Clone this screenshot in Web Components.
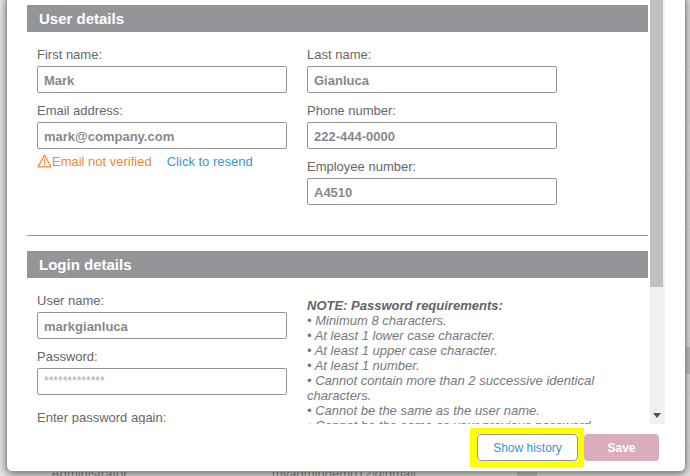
<!DOCTYPE html>
<html>
<head>
<meta charset="utf-8">
<title>Edit user</title>
<style>
  html, body { margin: 0; height: 476px; overflow: hidden; background: #e6e7e7; }
  body { font-family: "Liberation Sans", Arial, sans-serif; position: relative; }
</style>
</head>
<body>
<user-table>
  <user-row></user-row>
  <user-row></user-row>
  <user-row></user-row>
  <user-row></user-row>
  <user-row></user-row>
  <user-row></user-row>
  <user-row side-action></user-row>
  <user-row></user-row>
  <user-row name="Administrator" email="myadmindemo12@gmail" row-action></user-row>
</user-table>

<modal-dialog>
  <form-section heading="User details">
    <div>
      <form-field label="First name:" value="Mark"></form-field>
      <form-field label="Email address:" value="mark@company.com"></form-field>
      <verify-notice></verify-notice>
    </div>
    <div>
      <form-field label="Last name:" value="Gianluca"></form-field>
      <form-field label="Phone number:" value="222-444-0000"></form-field>
      <form-field label="Employee number:" value="A4510"></form-field>
    </div>
  </form-section>
  <section-rule></section-rule>
  <form-section heading="Login details">
    <div>
      <form-field label="User name:" value="markgianluca"></form-field>
      <form-field label="Password:" placeholder="*************"></form-field>
      <form-field label="Enter password again:" placeholder="*************" spaced></form-field>
    </div>
    <password-notes>
      <b>NOTE: Password requirements:</b>
      <span>• Minimum 8 characters.</span>
      <span>• At least 1 lower case character.</span>
      <span>• At least 1 upper case character.</span>
      <span>• At least 1 number.</span>
      <span>• Cannot contain more than 2 successive identical characters.</span>
      <span>• Cannot be the same as the user name.</span>
      <span>• Cannot be the same as your previous password.</span>
    </password-notes>
  </form-section>

  <app-button slot="footer" kind="outline" flagged>Show history</app-button>
  <app-button slot="footer" kind="disabled">Save</app-button>
</modal-dialog>

<script>
class UserTable extends HTMLElement {
  constructor() {
    super();
    this.attachShadow({ mode: 'open' });
    this.shadowRoot.innerHTML = `
      <style>
        :host {
          display: block;
          padding-top: 13px;
          height: 463px;
          overflow: hidden;
        }
      </style>
      <slot></slot>
    `;
  }
}

class UserRow extends HTMLElement {
  constructor() {
    super();
    this.attachShadow({ mode: 'open' });
  }

  connectedCallback() {
    const name = this.getAttribute('name') || '';
    const email = this.getAttribute('email') || '';
    this.shadowRoot.innerHTML = `
      <style>
        :host {
          display: block;
          height: 54.25px;
          box-sizing: border-box;
          border-bottom: 1px solid #dcdddd;
          background: #e4e5e5;
          position: relative;
          font-size: 13px;
          color: #8b8c8d;
        }
        .cell { position: absolute; top: 19px; line-height: 16px; white-space: nowrap; }
        .box { position: absolute; width: 20px; height: 27px; top: 13px; background: #c5c6c6; }
        .side { top: 8px; }
        .chevron { display: block; margin: 4px auto 0; }
      </style>
      ${name ? `<span class="cell" style="left:51px">${name}</span>` : ''}
      ${email ? `<span class="cell" style="left:272px">${email}</span>` : ''}
      ${this.hasAttribute('row-action') ? `<div class="box" style="left:517px"><svg class="chevron" width="14" height="8" viewBox="0 0 14 8"><path d="M1 1l6 5 6-5" fill="none" stroke="#e6e7e7" stroke-width="2"/></svg></div>` : ''}
      ${this.hasAttribute('side-action') ? `<div class="box side" style="left:686px"></div>` : ''}
    `;
  }
}

class ModalDialog extends HTMLElement {
  constructor() {
    super();
    this.attachShadow({ mode: 'open' });
    this.shadowRoot.innerHTML = `
      <style>
        :host {
          position: absolute;
          left: 6px;
          top: -6px;
          width: 680px;
          height: 478px;
          box-sizing: border-box;
          display: flex;
          flex-direction: column;
          background: #fff;
          border: 1px solid #939598;
          border-radius: 6px;
          box-shadow: 0 2px 8px rgba(0, 0, 0, 0.55);
        }
        .body {
          height: 429px;
          display: flex;
          padding-left: 20px;
          overflow: hidden;
          flex: none;
        }
        .content {
          width: 621px;
          flex: none;
          padding-top: 10px;
        }
        .track {
          width: 15px;
          margin-left: 2px;
          flex: none;
          height: 100%;
          background: #f0f0f0;
          display: flex;
          flex-direction: column;
          box-sizing: border-box;
          padding-right: 2px;
        }
        .thumb {
          height: 292px;
          background: #c1c1c1;
        }
        .arrow {
          margin: auto 0 6px 3px;
        }
        .footer {
          display: flex;
          justify-content: flex-end;
          gap: 6px;
          padding: 10px 26px 0 0;
        }
      </style>
      <div class="body">
        <div class="content"><slot></slot></div>
        <div class="track">
          <div class="thumb"></div>
          <svg class="arrow" width="8" height="5" viewBox="0 0 8 5"><path d="M0 0h8L4 5z" fill="#505050"/></svg>
        </div>
      </div>
      <div class="footer"><slot name="footer"></slot></div>
    `;
  }
}

class FormSection extends HTMLElement {
  constructor() {
    super();
    this.attachShadow({ mode: 'open' });
  }

  connectedCallback() {
    this.shadowRoot.innerHTML = `
      <style>
        :host { display: block; }
        h2 {
          margin: 0;
          height: 27px;
          line-height: 27px;
          padding-left: 12px;
          background: #939598;
          color: #fff;
          font-size: 15px;
          font-weight: bold;
        }
        .grid {
          display: grid;
          grid-template-columns: 250px 1fr;
          column-gap: 20px;
          padding: 15px 8px 0 10px;
        }
      </style>
      <h2>${this.getAttribute('heading')}</h2>
      <div class="grid"><slot></slot></div>
    `;
  }
}

class FormField extends HTMLElement {
  constructor() {
    super();
    this.attachShadow({ mode: 'open' });
  }

  connectedCallback() {
    const value = this.getAttribute('value');
    const placeholder = this.getAttribute('placeholder');
    this.shadowRoot.innerHTML = `
      <style>
        :host {
          display: block;
          width: 250px;
          margin-bottom: 10px;
        }
        :host([spaced]) { margin-top: 15px; }
        label {
          display: block;
          height: 15px;
          margin-bottom: 4px;
          line-height: 15px;
          font-size: 13px;
          color: #666769;
        }
        .input {
          box-sizing: border-box;
          height: 27px;
          border: 1px solid #939598;
          border-radius: 2px;
          padding: 0 6px;
          line-height: 27px;
          font-size: 13px;
          font-weight: bold;
          color: #87888a;
          white-space: nowrap;
          overflow: hidden;
        }
        .placeholder {
          font-weight: normal;
          font-size: 12px;
          line-height: 24px;
          color: #a9aaab;
        }
      </style>
      <label>${this.getAttribute('label')}</label>
      <div class="input ${value ? '' : 'placeholder'}">${value || placeholder}</div>
    `;
  }
}

class VerifyNotice extends HTMLElement {
  constructor() {
    super();
    this.attachShadow({ mode: 'open' });
    this.shadowRoot.innerHTML = `
      <style>
        :host {
          display: flex;
          align-items: center;
          margin-top: -6px;
          height: 16px;
          font-size: 13px;
          color: #f58634;
          white-space: nowrap;
        }
        svg { flex: none; display: block; }
        a { margin-left: 15px; color: #3a96d6; text-decoration: none; }
      </style>
      <svg width="15" height="14" viewBox="0 0 15 14">
        <path d="M7.5 1.2L14 12.8H1z" fill="none" stroke="#f58634" stroke-width="1.3" stroke-linejoin="round"/>
        <path d="M7.5 5v4.2M7.5 10.2v1.3" stroke="#f58634" stroke-width="1.3"/>
      </svg>
      <span>Email not verified</span>
      <a href="#">Click to resend</a>
    `;
  }
}

class SectionRule extends HTMLElement {
  constructor() {
    super();
    this.attachShadow({ mode: 'open' });
    this.shadowRoot.innerHTML = `
      <style>
        :host {
          display: block;
          height: 1px;
          margin: 20px 0 15px;
          background: #939598;
        }
      </style>
    `;
  }
}

class PasswordNotes extends HTMLElement {
  constructor() {
    super();
    this.attachShadow({ mode: 'open' });
    this.shadowRoot.innerHTML = `
      <style>
        :host {
          display: block;
          padding-top: 5px;
          font-size: 13px;
          line-height: 15px;
          font-style: italic;
          color: #77787a;
        }
        ::slotted(b) { display: block; color: #626365; }
        ::slotted(span) { display: block; }
      </style>
      <slot></slot>
    `;
  }
}

class AppButton extends HTMLElement {
  constructor() {
    super();
    this.attachShadow({ mode: 'open' });
    this.shadowRoot.innerHTML = `
      <style>
        :host {
          display: flex;
          align-items: center;
          justify-content: center;
          box-sizing: border-box;
          height: 27px;
          border-radius: 4px;
          font-size: 12px;
          position: relative;
        }
        :host([kind="outline"]) {
          width: 101px;
          background: #fff;
          border: 1px solid #939598;
          color: #3a96d6;
        }
        :host([kind="disabled"]) {
          width: 75px;
          background: #d9adb9;
          color: #fff;
          font-weight: bold;
        }
        /* yellow marker drawn over the button, square corners */
        :host([flagged])::before {
          content: "";
          position: absolute;
          top: -7px;
          right: -7px;
          bottom: -7px;
          left: -8px;
          border: solid #ffff00;
          border-width: 6px 6px 6px 7px;
          pointer-events: none;
        }
      </style>
      <slot></slot>
    `;
  }
}

customElements.define('user-table', UserTable);
customElements.define('user-row', UserRow);
customElements.define('modal-dialog', ModalDialog);
customElements.define('form-section', FormSection);
customElements.define('form-field', FormField);
customElements.define('verify-notice', VerifyNotice);
customElements.define('section-rule', SectionRule);
customElements.define('password-notes', PasswordNotes);
customElements.define('app-button', AppButton);
</script>
</body>
</html>
